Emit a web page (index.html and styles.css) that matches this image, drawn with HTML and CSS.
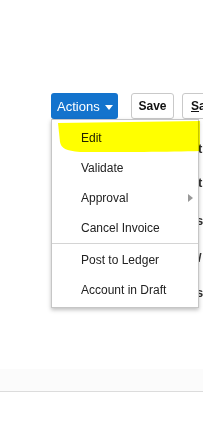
FILE: index.html
```html
<!DOCTYPE html>
<html>
<head>
<meta charset="utf-8">
<link rel="stylesheet" href="styles.css">
</head>
<body>
<div class="page">
  <div class="toolbar">
    <button class="btn-actions">Actions <span class="caret"></span></button>
    <button class="btn">Save</button>
    <button class="btn btn-cut"><u>S</u>a</button>
  </div>
  <div class="fields">
    <div class="frag f1">t</div>
    <div class="frag f2">t</div>
    <div class="frag f3">s</div>
    <div class="frag f4">/</div>
    <div class="frag f5">s</div>
  </div>
  <div class="footer"></div>

  <div class="menu">
    <div class="item">Edit</div>
    <div class="item">Validate</div>
    <div class="item has-sub">Approval <span class="subarrow"></span></div>
    <div class="item">Cancel Invoice</div>
    <div class="sep"></div>
    <div class="item">Post to Ledger</div>
    <div class="item">Account in Draft</div>
  </div>

  <svg class="highlight" width="203" height="40" viewBox="0 0 203 40">
    <path d="M58 3 L200 1 L200 31 C170 32 120 32 80 32 C66 31 61 28 60 22 Z" fill="#ffff00"/>
  </svg>
</div>
</body>
</html>
```

FILE: styles.css
```css
html, body {
  margin: 0;
  padding: 0;
  background: #fff;
  overflow: hidden;
}
.page {
  position: relative;
  width: 203px;
  height: 427px;
  overflow: hidden;
  font-family: "Liberation Sans", Arial, sans-serif;
}
.toolbar {
  display: flex;
  align-items: stretch;
  padding: 93px 0 0 51px;
  height: 26px;
  white-space: nowrap;
}
.btn-actions {
  flex: none;
  width: 67px;
  height: 26px;
  background: #1373cd;
  color: #fff;
  border: none;
  border-radius: 3px;
  font-family: "Liberation Sans", Arial, sans-serif;
  font-size: 13px;
  padding: 0 0 0 6px;
  text-align: left;
  display: flex;
  align-items: center;
  gap: 5px;
}
.caret {
  display: inline-block;
  width: 0;
  height: 0;
  border-left: 4.5px solid transparent;
  border-right: 4.5px solid transparent;
  border-top: 5px solid #fff;
  margin-top: 2px;
}
.btn {
  flex: none;
  margin-left: 13px;
  width: 43px;
  height: 26px;
  background: #fff;
  border: 1px solid #c9c9c9;
  border-radius: 3px;
  font-family: "Liberation Sans", Arial, sans-serif;
  font-size: 12px;
  font-weight: bold;
  color: #111;
  padding: 0;
}
.btn-cut {
  margin-left: 8px;
  width: 30px;
  text-align: left;
  padding-left: 8px;
}
.fields {
  position: relative;
  height: 250px;
}
.frag {
  position: absolute;
  left: 198px;
  font-size: 13px;
  font-weight: bold;
  color: #333;
}
.f1 { top: 22px; }
.f2 { top: 56px; }
.f3 { top: 94px; left: 196px; }
.f4 { top: 131px; }
.f5 { top: 166px; left: 196px; }
.footer {
  height: 22px;
  background: #fbfbfb;
  border-bottom: 1px solid #dcdcdc;
}
.menu {
  position: absolute;
  left: 51px;
  top: 119px;
  width: 146px;
  background: #fff;
  border: 1px solid #c6c6c6;
  box-shadow: 0 2px 4px rgba(0,0,0,0.25);
  padding: 3px 0 2px 0;
}
.item {
  height: 30px;
  line-height: 30px;
  padding-left: 29px;
  font-size: 12px;
  color: #222;
  position: relative;
}
.subarrow {
  position: absolute;
  right: 5px;
  top: 11px;
  width: 0;
  height: 0;
  border-top: 4px solid transparent;
  border-bottom: 4px solid transparent;
  border-left: 5px solid #999;
}
.sep {
  height: 1px;
  background: #d4d4d4;
  margin: 0 0 1px;
}
.highlight {
  position: absolute;
  left: 0;
  top: 120px;
  mix-blend-mode: multiply;
}
```
